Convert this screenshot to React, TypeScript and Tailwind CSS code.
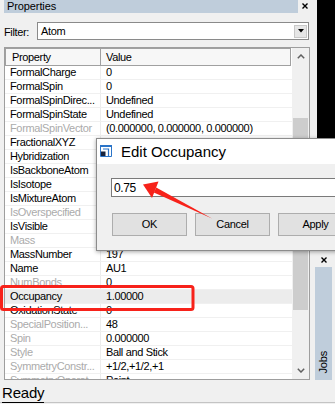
type Row = { name: string; value: string; gray?: boolean; sel?: boolean };

const rows: Row[] = [
  { name: "FormalCharge", value: "0" },
  { name: "FormalSpin", value: "0" },
  { name: "FormalSpinDirec...", value: "Undefined" },
  { name: "FormalSpinState", value: "Undefined" },
  { name: "FormalSpinVector", value: "(0.000000, 0.000000, 0.000000)", gray: true },
  { name: "FractionalXYZ", value: "" },
  { name: "Hybridization", value: "" },
  { name: "IsBackboneAtom", value: "" },
  { name: "IsIsotope", value: "" },
  { name: "IsMixtureAtom", value: "" },
  { name: "IsOverspecified", value: "", gray: true },
  { name: "IsVisible", value: "" },
  { name: "Mass", value: "", gray: true },
  { name: "MassNumber", value: "197" },
  { name: "Name", value: "AU1" },
  { name: "NumBonds", value: "0", gray: true },
  { name: "Occupancy", value: "1.00000", sel: true },
  { name: "OxidationState", value: "0" },
  { name: "SpecialPosition...", value: "48", gray: true },
  { name: "Spin", value: "0.000000", gray: true },
  { name: "Style", value: "Ball and Stick", gray: true },
  { name: "SymmetryConstr...", value: "+1/2,+1/2,+1", gray: true },
  { name: "SymmetryOperat...", value: "Point", gray: true },
];

function Chevron({ up }: { up?: boolean }) {
  return (
    <svg width="8" height="5" viewBox="0 0 8 5">
      <path
        d={up ? "M0.8 4.2 L4 1 L7.2 4.2" : "M0.8 0.8 L4 4 L7.2 0.8"}
        fill="none"
        stroke="#606060"
        strokeWidth="1.5"
      />
    </svg>
  );
}

function CloseX() {
  return (
    <svg width="6" height="6" viewBox="0 0 6 6">
      <path d="M0.5 0.5 L5.5 5.5 M5.5 0.5 L0.5 5.5" stroke="#000" strokeWidth="1.4" />
    </svg>
  );
}

function DialogIcon() {
  return (
    <svg width="12" height="12" viewBox="0 0 12 12">
      <rect x="0" y="0" width="12" height="2" fill="#2a74c8" />
      <path d="M0.5 11.5 V0.5 M11.5 0.5 V11.5 H0.5" fill="none" stroke="#2a74c8" />
      <path d="M3 4 H8.5 V11.5" fill="none" stroke="#2a74c8" strokeWidth="1.2" />
      <rect x="1" y="6.5" width="4.5" height="4.5" fill="#17243d" />
    </svg>
  );
}

export default function App() {
  return (
    <div className="relative w-[335px] h-[404px] overflow-hidden bg-[#f0f0f0] font-['Liberation_Sans',Arial,sans-serif] text-black">
      <div className="flex h-[380px]">
        {/* properties panel */}
        <div className="w-[313px] flex flex-col">
          <div className="flex h-[14px] items-start">
            <div className="ml-[4px] w-[294px] h-[13px] bg-[#bfcddb] pl-[3px] text-[11px] leading-[13px] tracking-[-0.1px]">
              Properties
            </div>
            <div className="ml-[4px] mt-[3px]">
              <CloseX />
            </div>
          </div>

          <div className="mt-[8px] flex h-[18px] items-center">
            <div className="w-[37px] pl-[4px] pt-[3px] text-[11px] leading-[13px] tracking-[-0.35px]">Filter:</div>
            <div className="flex h-[18px] w-[272px] items-center border border-[#8a8a8a] bg-white">
              <div className="flex-1 pl-[3px] text-[11px] leading-[13px] tracking-[-0.35px]">Atom</div>
              <div className="mr-[1px] flex h-[13px] w-[13px] items-center justify-center border border-[#c8c8c8] bg-[#e6e6e6]">
                <svg width="6" height="4" viewBox="0 0 6 4">
                  <path d="M0 0 H6 L3 3.5 Z" fill="#000" />
                </svg>
              </div>
            </div>
          </div>

          {/* table */}
          <div className="ml-[4px] mt-[7px] flex h-[333px] w-[306px] border border-[#9e9e9e] bg-white">
            <div className="flex w-[287px] flex-col overflow-hidden">
              <div className="flex h-[18px] shrink-0 text-[11px] leading-[16px] tracking-[-0.35px]">
                <div className="w-[96px] border border-[#a0a0a0] bg-[#f7f7f7] pl-[6px]">Property</div>
                <div className="w-[190px] border border-l-0 border-[#a0a0a0] bg-[#f7f7f7] pl-[5px]">Value</div>
              </div>
              {rows.map((r) => (
                <div
                  key={r.name}
                  className={`flex h-[14px] shrink-0 border-b border-[#f0f0f0] text-[11px] leading-[13px] tracking-[-0.35px] ${
                    r.sel ? "bg-[#ececec]" : ""
                  }`}
                >
                  <div
                    className={`w-[96px] shrink-0 overflow-hidden whitespace-nowrap border-r border-[#ececec] pl-[5px] ${
                      r.gray ? "text-[#ababab]" : "text-black"
                    }`}
                  >
                    {r.name}
                  </div>
                  <div className="flex-1 whitespace-nowrap pl-[5px]">{r.value}</div>
                </div>
              ))}
            </div>
            {/* scrollbar */}
            <div className="flex w-[17px] flex-col bg-[#f0f0f0]">
              <div className="flex h-[17px] items-center justify-center">
                <Chevron up />
              </div>
              <div className="h-[53px]" />
              <div className="ml-[1px] h-[192px] w-[15px] bg-[#cdcdcd]" />
              <div className="flex-1" />
              <div className="flex h-[17px] items-center justify-center">
                <Chevron />
              </div>
            </div>
          </div>
        </div>

        {/* right column */}
        <div className="flex w-[22px] flex-col">
          <div className="ml-[4px] h-[250px] w-[18px] bg-black" />
          <div className="ml-[8px] mt-[7px] h-[10px]">
            <CloseX />
          </div>
          <div className="ml-[2px] flex h-[113px] w-[17px] flex-col items-center justify-end bg-[#bfcddb] pb-[7px]">
            <span className="rotate-180 text-[11px] leading-[13px] tracking-[-0.2px] [writing-mode:vertical-rl]">Jobs</span>
          </div>
        </div>
      </div>

      {/* status bar */}
      <div className="h-[24px] pt-[4px]">
        <div className="flex h-[19px] items-start border-b border-[#c4c4c4]">
          <span className="relative ml-[2px] h-[19px] border-b border-black text-[15px] leading-[18px] tracking-[-0.2px]">
            Ready
          </span>
        </div>
      </div>

      {/* dialog */}
      <div className="absolute left-[96px] top-[138px] h-[113px] w-[260px] border border-[#8c8c8c] bg-[#f0f0f0] shadow-[0_1px_4px_rgba(0,0,0,0.35)]">
        <div className="flex h-[25px] items-center bg-white">
          <div className="ml-[3px] mt-[-1px]">
            <DialogIcon />
          </div>
          <div className="ml-[9px] text-[15px] leading-[18px]">Edit Occupancy</div>
        </div>
        <div className="ml-[14px] mt-[14px] flex h-[19px] w-[240px] items-center border border-[#7a7a7a] bg-white pl-[2px] text-[12px] leading-[14px] tracking-[-0.4px]">
          0.75
        </div>
        <div className="ml-[15px] mt-[16px] flex gap-[8px] text-[11px] tracking-[-0.3px]">
          {["OK", "Cancel", "Apply"].map((b) => (
            <div
              key={b}
              className="flex h-[23px] w-[75px] shrink-0 items-center justify-center border border-[#adadad] bg-[#e1e1e1]"
            >
              {b}
            </div>
          ))}
        </div>
      </div>

      {/* red annotations */}
      <svg className="pointer-events-none absolute left-0 top-0" width="335" height="404" viewBox="0 0 335 404">
        <rect x="1.5" y="286.5" width="191.5" height="23" rx="2" fill="none" stroke="#f7221a" strokeWidth="3" />
        <polygon points="143,184.5 158.5,181.5 152,198" fill="#f7221a" />
        <polygon points="156.2,187.6 153.8,192.4 212,218.5" fill="#f7221a" />
      </svg>
    </div>
  );
}
